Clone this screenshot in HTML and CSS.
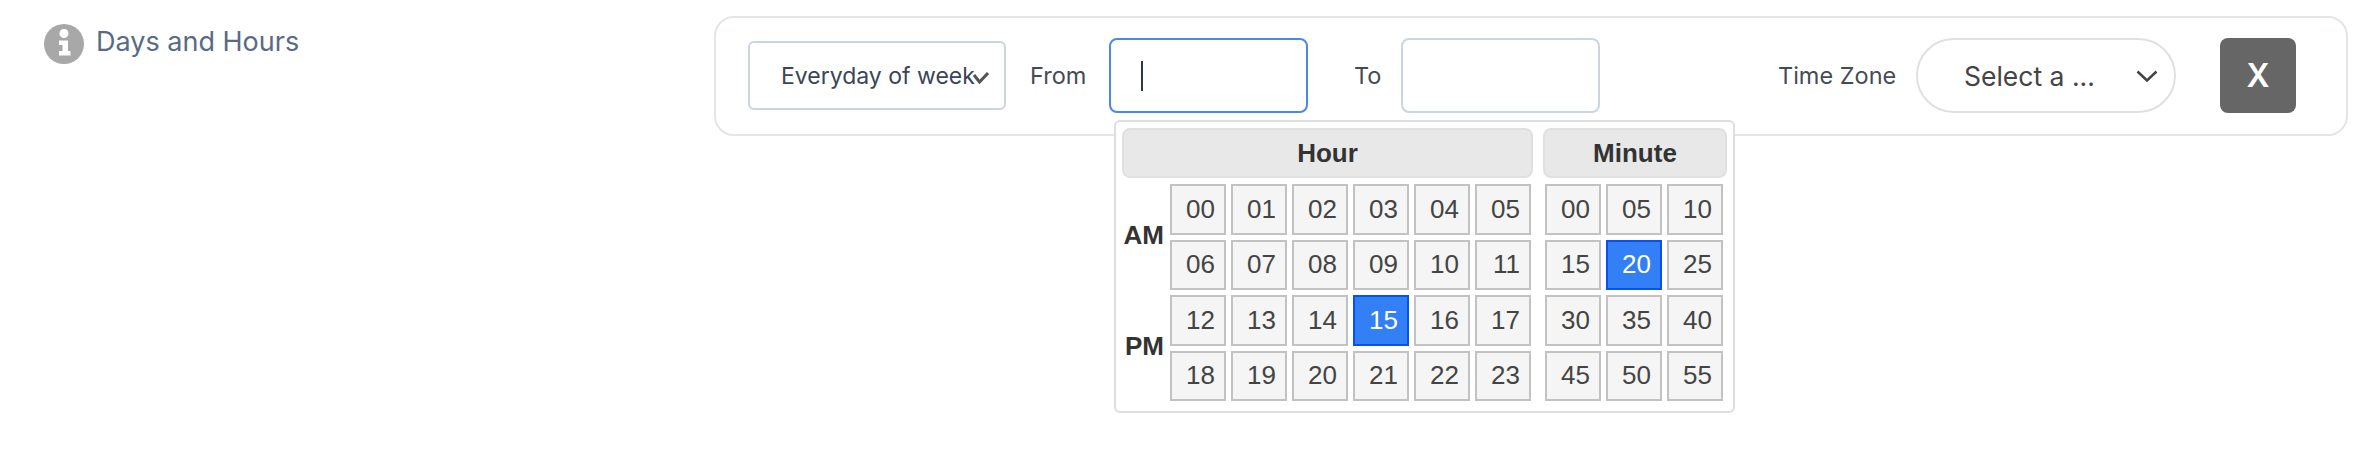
FILE: index.html
```html
<!DOCTYPE html>
<html lang="en">
<head>
<meta charset="utf-8">
<title>Days and Hours</title>
<link rel="stylesheet" href="styles.css">
</head>
<body>
<div class="row">
  <div class="label-col">
    <svg class="info-icon" viewBox="0 0 40 40" aria-hidden="true">
      <circle cx="20" cy="20" r="20" fill="#a8a8a8"/>
      <circle cx="20" cy="9.500" r="4.500" fill="#fff"/>
      <path d="M15 16.500h9V27h2.500v4.500H15V27h3.500v-6H15z" fill="#fff"/>
    </svg>
    <span class="field-label">Days and Hours</span>
  </div>
  <div class="panel">
    <div class="day-select">
      <span>Everyday of week</span>
      <svg class="day-arrow" viewBox="0 0 16 12" aria-hidden="true"><path d="M1 3l5.500 7L15 1" fill="none" stroke="#555" stroke-width="3"/></svg>
    </div>
    <span class="inline-label from-label">From</span>
    <div class="time-field">
      <div class="time-input focused"><span class="caret"></span></div>
      <div class="picker">
        <div class="picker-heads">
          <div class="head head-hour">Hour</div>
          <div class="head head-minute">Minute</div>
        </div>
        <div class="picker-body">
          <div class="meridiems">
            <span class="meridiem">AM</span>
            <span class="meridiem">PM</span>
          </div>
          <div class="cells cells-hour">
            <span class="cell">00</span><span class="cell">01</span><span class="cell">02</span><span class="cell">03</span><span class="cell">04</span><span class="cell">05</span>
            <span class="cell">06</span><span class="cell">07</span><span class="cell">08</span><span class="cell">09</span><span class="cell">10</span><span class="cell">11</span>
            <span class="cell">12</span><span class="cell">13</span><span class="cell">14</span><span class="cell selected">15</span><span class="cell">16</span><span class="cell">17</span>
            <span class="cell">18</span><span class="cell">19</span><span class="cell">20</span><span class="cell">21</span><span class="cell">22</span><span class="cell">23</span>
          </div>
          <div class="cells cells-minute">
            <span class="cell">00</span><span class="cell">05</span><span class="cell">10</span>
            <span class="cell">15</span><span class="cell selected">20</span><span class="cell">25</span>
            <span class="cell">30</span><span class="cell">35</span><span class="cell">40</span>
            <span class="cell">45</span><span class="cell">50</span><span class="cell">55</span>
          </div>
        </div>
      </div>
    </div>
    <span class="inline-label to-label">To</span>
    <div class="time-input"></div>
    <span class="inline-label zone-label">Time Zone</span>
    <div class="zone-select">
      <span>Select a ...</span>
      <svg class="zone-arrow" viewBox="0 0 22 12" aria-hidden="true"><path d="M1.500 1.500L11 10.500l9.500-9" fill="none" stroke="#444" stroke-width="2.500"/></svg>
    </div>
    <button class="remove-btn" type="button">X</button>
  </div>
</div>
</body>
</html>
```
FILE: styles.css
```css
* { box-sizing: border-box; }

html, body {
  margin: 0;
  background: #fff;
}

body {
  width: 2372px;
  height: 454px;
  overflow: hidden;
  font-family: Inter, "Liberation Sans", sans-serif;
}

.row {
  display: flex;
  align-items: flex-start;
  padding: 16px 24px 0 44px;
}

.label-col {
  width: 670px;
  flex: none;
  display: flex;
  align-items: flex-start;
  gap: 12px;
  padding-top: 8px;
}

.info-icon {
  width: 40px;
  height: 40px;
  flex: none;
}

.field-label {
  font-size: 27px;
  line-height: 40px;
  margin-top: -2px;
  color: #5a6a85;
}

.panel {
  width: 1634px;
  height: 120px;
  flex: none;
  display: flex;
  align-items: center;
  padding: 0 0 1px 32px;
  border: 2px solid #e2e6e8;
  border-radius: 20px;
}

.day-select {
  width: 258px;
  height: 69px;
  flex: none;
  display: flex;
  align-items: center;
  padding-left: 31px;
  border: 2px solid #cbd5e0;
  border-radius: 6px;
  font-size: 23px;
  color: #3a4558;
  white-space: nowrap;
  position: relative;
}

.day-arrow {
  position: absolute;
  right: 15px;
  top: 29px;
  width: 16px;
  height: 12px;
}

.inline-label {
  font-size: 23.500px;
  color: #444b57;
  flex: none;
}

.from-label { margin-left: 24px; width: 79px; }
.to-label { margin-left: 46px; width: 47px; }
.zone-label { margin-left: 178px; width: 138px; }

.time-field {
  position: relative;
  flex: none;
}

.time-input {
  width: 199px;
  height: 75px;
  flex: none;
  border: 2px solid #cbd5e0;
  border-radius: 8px;
  background: #fff;
}

.time-input.focused {
  border-color: #4a88ee;
  padding: 21px 0 0 30px;
}

.caret {
  display: block;
  width: 2px;
  height: 30px;
  background: #2d3748;
}

.picker {
  position: absolute;
  left: 5px;
  top: 82px;
  width: 621px;
  height: 293px;
  padding: 6px;
  border: 2px solid #dedede;
  border-radius: 6px;
  background: #fff;
  font-family: "Liberation Sans", Arial, sans-serif;
  z-index: 2;
}

.picker-heads {
  display: flex;
  gap: 10px;
}

.head {
  height: 50px;
  display: flex;
  align-items: center;
  justify-content: center;
  background: #e8e8e8;
  border: 2px solid #e0e0e0;
  border-radius: 8px;
  font-size: 26px;
  font-weight: 700;
  color: #333;
}

.head-hour { width: 411px; }
.head-minute { width: 184px; }

.picker-body {
  display: flex;
  margin-top: 6px;
}

.meridiems {
  width: 48px;
  flex: none;
  display: grid;
  grid-template-rows: 1fr 1fr;
  gap: 5px;
  height: 217px;
}

.meridiem {
  display: flex;
  align-items: center;
  justify-content: flex-end;
  padding: 0 6px 3px 0;
  font-size: 26px;
  font-weight: 700;
  color: #333;
}

.cells {
  display: grid;
  grid-template-rows: repeat(4, 1fr);
  gap: 5px;
  height: 217px;
  flex: none;
}

.cells-hour { grid-template-columns: repeat(6, 56px); }
.cells-minute { grid-template-columns: repeat(3, 56px); margin-left: 14px; }

.cell {
  display: flex;
  align-items: center;
  justify-content: flex-end;
  padding-right: 9px;
  background: #f5f5f5;
  border: 2px solid #c2c2c2;
  font-size: 26px;
  color: #444;
}

.cell.selected {
  background: #337ff5;
  border-color: #0a50f0;
  color: #fff;
}

.zone-select {
  width: 260px;
  height: 75px;
  flex: none;
  display: flex;
  align-items: center;
  justify-content: space-between;
  padding: 0 16px 0 46px;
  border: 2px solid #e0e0e0;
  border-radius: 38px;
  font-size: 26.500px;
  color: #444;
}

.zone-arrow {
  width: 22px;
  height: 12px;
}

.remove-btn {
  width: 76px;
  height: 75px;
  flex: none;
  margin-left: 44px;
  border: 0;
  border-radius: 8px;
  background: #666;
  color: #fff;
  font-family: Inter, "Liberation Sans", sans-serif;
  font-size: 32px;
  font-weight: 600;
  padding: 0;
}
```
